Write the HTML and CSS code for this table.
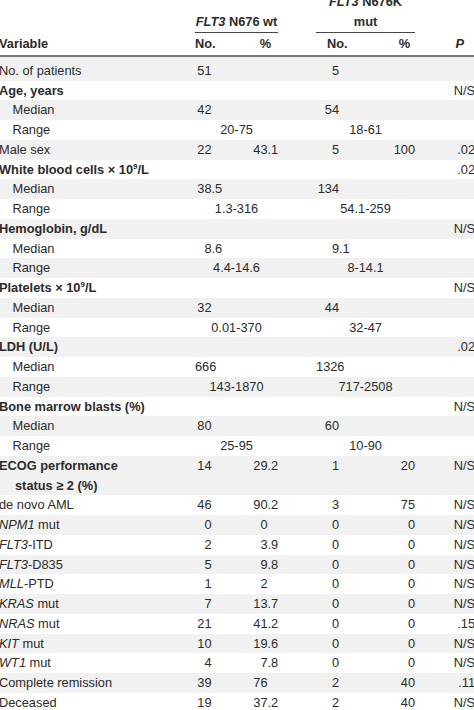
FILE: index.html
```html
<!DOCTYPE html>
<html>
<head>
<meta charset="utf-8">
<link rel="stylesheet" href="styles.css">
</head>
<body>
<table class="tbl">
  <colgroup>
    <col class="c-var"><col class="c-n1"><col class="c-p1"><col class="c-sp"><col class="c-n2"><col class="c-p2"><col class="c-pv">
  </colgroup>
  <thead>
    <tr class="grp-row">
      <th></th>
      <th class="grp" colspan="2"><i>FLT3</i> N676 wt</th>
      <th></th>
      <th class="grp" colspan="2"><i>FLT3</i> N676K<br>mut</th>
      <th></th>
    </tr>
    <tr class="head-row">
      <th class="h-var">Variable</th>
      <th class="h-n1">No.</th>
      <th class="h-p1">%</th>
      <th></th>
      <th class="h-n2">No.</th>
      <th class="h-p2">%</th>
      <th class="h-pv"><i>P</i></th>
    </tr>
  </thead>
  <tbody>
    <tr><td>No. of patients</td><td class="n1">51</td><td class="p1"></td><td></td><td class="n2">5</td><td class="p2"></td><td class="pv"></td></tr>
    <tr><td class="cat">Age, years</td><td></td><td></td><td></td><td></td><td></td><td class="pv">N/S</td></tr>
    <tr><td class="ind">Median</td><td class="n1">42</td><td></td><td></td><td class="n2">54</td><td></td><td></td></tr>
    <tr><td class="ind">Range</td><td class="rng" colspan="2">20-75</td><td></td><td class="rng" colspan="2">18-61</td><td></td></tr>
    <tr><td>Male sex</td><td class="n1">22</td><td class="p1">43<span class="fr">.1</span></td><td></td><td class="n2">5</td><td class="p2">100</td><td class="pv">.02</td></tr>
    <tr><td class="cat">White blood cells × 10<sup>9</sup>/L</td><td></td><td></td><td></td><td></td><td></td><td class="pv">.02</td></tr>
    <tr><td class="ind">Median</td><td class="n1">38<span class="fr">.5</span></td><td></td><td></td><td class="n2">134</td><td></td><td></td></tr>
    <tr><td class="ind">Range</td><td class="rng" colspan="2">1.3-316</td><td></td><td class="rng" colspan="2">54.1-259</td><td></td></tr>
    <tr><td class="cat">Hemoglobin, g/dL</td><td></td><td></td><td></td><td></td><td></td><td class="pv">N/S</td></tr>
    <tr><td class="ind">Median</td><td class="n1">8<span class="fr">.6</span></td><td></td><td></td><td class="n2">9<span class="fr">.1</span></td><td></td><td></td></tr>
    <tr><td class="ind">Range</td><td class="rng" colspan="2">4.4-14.6</td><td></td><td class="rng" colspan="2">8-14.1</td><td></td></tr>
    <tr><td class="cat">Platelets × 10<sup>9</sup>/L</td><td></td><td></td><td></td><td></td><td></td><td class="pv">N/S</td></tr>
    <tr><td class="ind">Median</td><td class="n1">32</td><td></td><td></td><td class="n2">44</td><td></td><td></td></tr>
    <tr><td class="ind">Range</td><td class="rng" colspan="2">0.01-370</td><td></td><td class="rng" colspan="2">32-47</td><td></td></tr>
    <tr><td class="cat">LDH (U/L)</td><td></td><td></td><td></td><td></td><td></td><td class="pv">.02</td></tr>
    <tr><td class="ind">Median</td><td class="n1">666</td><td></td><td></td><td class="n2">1326</td><td></td><td></td></tr>
    <tr><td class="ind">Range</td><td class="rng" colspan="2">143-1870</td><td></td><td class="rng" colspan="2">717-2508</td><td></td></tr>
    <tr><td class="cat">Bone marrow blasts (%)</td><td></td><td></td><td></td><td></td><td></td><td class="pv">N/S</td></tr>
    <tr><td class="ind">Median</td><td class="n1">80</td><td></td><td></td><td class="n2">60</td><td></td><td></td></tr>
    <tr><td class="ind">Range</td><td class="rng" colspan="2">25-95</td><td></td><td class="rng" colspan="2">10-90</td><td></td></tr>
    <tr class="top"><td class="cat hang">ECOG performance<br>status ≥ 2 (%)</td><td class="n1">14</td><td class="p1">29<span class="fr">.2</span></td><td></td><td class="n2">1</td><td class="p2">20</td><td class="pv">N/S</td></tr>
    <tr><td>de novo AML</td><td class="n1">46</td><td class="p1">90<span class="fr">.2</span></td><td></td><td class="n2">3</td><td class="p2">75</td><td class="pv">N/S</td></tr>
    <tr><td><i>NPM1</i> mut</td><td class="n1">0</td><td class="p1">0</td><td></td><td class="n2">0</td><td class="p2">0</td><td class="pv">N/S</td></tr>
    <tr><td><i>FLT3</i>-ITD</td><td class="n1">2</td><td class="p1">3<span class="fr">.9</span></td><td></td><td class="n2">0</td><td class="p2">0</td><td class="pv">N/S</td></tr>
    <tr><td><i>FLT3</i>-D835</td><td class="n1">5</td><td class="p1">9<span class="fr">.8</span></td><td></td><td class="n2">0</td><td class="p2">0</td><td class="pv">N/S</td></tr>
    <tr><td><i>MLL</i>-PTD</td><td class="n1">1</td><td class="p1">2</td><td></td><td class="n2">0</td><td class="p2">0</td><td class="pv">N/S</td></tr>
    <tr><td><i>KRAS</i> mut</td><td class="n1">7</td><td class="p1">13<span class="fr">.7</span></td><td></td><td class="n2">0</td><td class="p2">0</td><td class="pv">N/S</td></tr>
    <tr><td><i>NRAS</i> mut</td><td class="n1">21</td><td class="p1">41<span class="fr">.2</span></td><td></td><td class="n2">0</td><td class="p2">0</td><td class="pv">.15</td></tr>
    <tr><td><i>KIT</i> mut</td><td class="n1">10</td><td class="p1">19<span class="fr">.6</span></td><td></td><td class="n2">0</td><td class="p2">0</td><td class="pv">N/S</td></tr>
    <tr><td><i>WT1</i> mut</td><td class="n1">4</td><td class="p1">7<span class="fr">.8</span></td><td></td><td class="n2">0</td><td class="p2">0</td><td class="pv">N/S</td></tr>
    <tr><td>Complete remission</td><td class="n1">39</td><td class="p1">76</td><td></td><td class="n2">2</td><td class="p2">40</td><td class="pv">.11</td></tr>
    <tr><td>Deceased</td><td class="n1">19</td><td class="p1">37<span class="fr">.2</span></td><td></td><td class="n2">2</td><td class="p2">40</td><td class="pv">N/S</td></tr>
  </tbody>
</table>
</body>
</html>
```
FILE: styles.css
```css
html, body {
  margin: 0;
  padding: 0;
  overflow: hidden;
  background: #ffffff;
}
body {
  font-family: "Liberation Sans", Arial, sans-serif;
  font-size: 12.8px;
  color: #2b2b2b;
}
.tbl {
  border-collapse: collapse;
  table-layout: fixed;
  width: 476px;
  margin: -8px 0 0 -1px;
  line-height: 19.75px;
}
.c-var { width: 196px; }
.c-n1 { width: 41.5px; }
.c-p1 { width: 41.5px; }
.c-sp { width: 38px; }
.c-n2 { width: 49.5px; }
.c-p2 { width: 49.5px; }
.c-pv { width: 60px; }

th, td {
  padding: 0;
  white-space: nowrap;
  vertical-align: baseline;
  text-align: left;
}
th { font-weight: bold; }

.grp {
  text-align: center;
  vertical-align: bottom;
  border-bottom: 1.5px solid #444444;
}
.head-row th {
  padding: 1px 0 1.5px;
  border-bottom: 2px solid #777777;
}
.h-n1 { padding-left: 0; }
.head-row .h-p1 { text-align: right; padding-right: 7px; }
.head-row .h-n2 { padding-left: 11px; }
.head-row .h-p2 { text-align: right; padding-right: 5px; }
.head-row .h-pv { text-align: right; padding-right: 11px; }

tbody tr:nth-child(odd) td { background: #f1f1f1; }
tbody tr:first-child td { padding-top: 4px; }

.cat { font-weight: bold; }
.ind { padding-left: 13.5px; }
.hang {
  white-space: normal;
  padding-left: 16px;
  text-indent: -16px;
}

.n1 { text-align: right; padding-right: 25px; }
.p1 { text-align: right; padding-right: 10.5px; }
.n2 { text-align: right; padding-right: 26.5px; }
.p2 { text-align: right; padding-right: 0; }
.pv { text-align: right; }
.rng { text-align: center; }

.fr {
  display: inline-block;
  width: 0;
  white-space: nowrap;
  text-align: left;
}
sup {
  font-size: 8px;
  line-height: 0;
  vertical-align: 5px;
}
```
